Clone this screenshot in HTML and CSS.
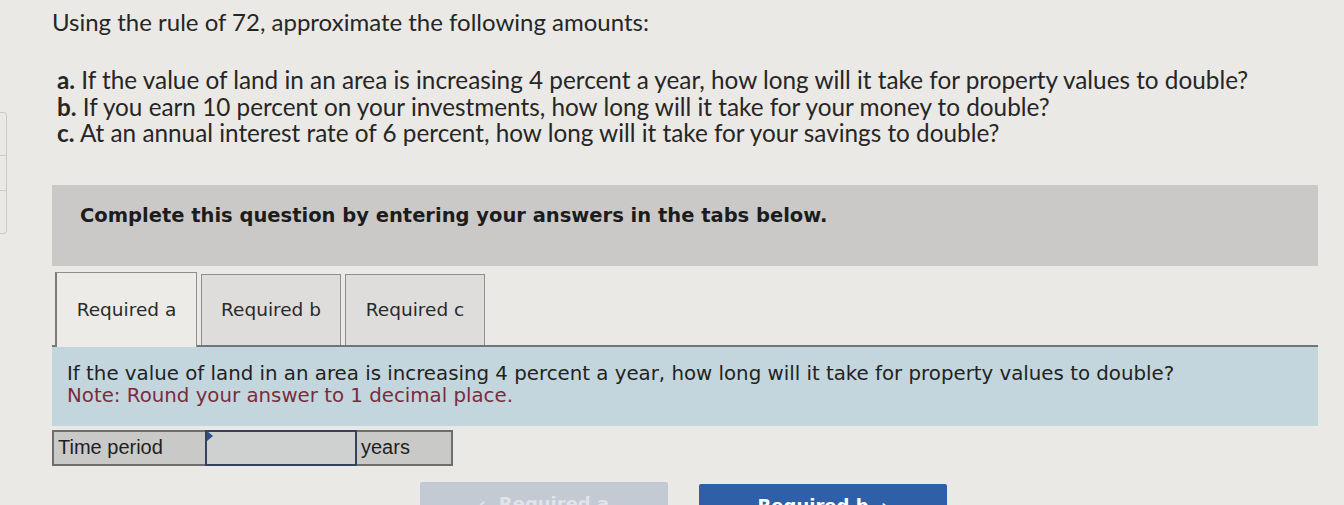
FILE: index.html
```html
<!DOCTYPE html>
<html lang="en">
<head>
  <meta charset="UTF-8">
  <title>Rule of 72</title>
  <link rel="stylesheet" href="styles.css">
</head>
<body>
  <div class="page">
    <div class="side-stub">
      <span></span>
      <span></span>
      <span></span>
    </div>
    <div class="question">
      <p class="intro">Using the rule of 72, approximate the following amounts:</p>
      <ol class="parts">
        <li><b>a.</b> If the value of land in an area is increasing 4 percent a year, how long will it take for property values to double?</li>
        <li><b>b.</b> If you earn 10 percent on your investments, how long will it take for your money to double?</li>
        <li><b>c.</b> At an annual interest rate of 6 percent, how long will it take for your savings to double?</li>
      </ol>

      <div class="instructions">Complete this question by entering your answers in the tabs below.</div>

      <div class="tabs">
        <div class="tab active">Required a</div>
        <div class="tab">Required b</div>
        <div class="tab">Required c</div>
      </div>

      <div class="tab-panel">
        <p>If the value of land in an area is increasing 4 percent a year, how long will it take for property values to double?</p>
        <p class="note">Note: Round your answer to 1 decimal place.</p>
      </div>

      <div class="answer-row">
        <div class="cell label">Time period</div>
        <div class="cell input"><span class="flag"></span></div>
        <div class="cell unit">years</div>
      </div>

      <div class="nav">
        <a href="javascript:;" class="btn prev">&lsaquo;&nbsp; Required a</a>
        <a href="javascript:;" class="btn next">Required b &nbsp;&rsaquo;</a>
      </div>
    </div>
  </div>
</body>
</html>
```

FILE: styles.css
```css
body {
  margin: 0;
  background: #eae9e5;
  color: #262626;
  height: 505px;
  overflow: hidden;
}
.page {
  display: flex;
  align-items: flex-start;
}
.side-stub {
  width: 6px;
  margin-top: 112px;
  display: flex;
  flex-direction: column;
  border: 1px solid #cbcac6;
  border-left: none;
  border-radius: 0 4px 4px 0;
}
.side-stub span {
  height: 42px;
  border-top: 1px solid #cbcac6;
}
.side-stub span:first-child {
  border-top: none;
}
.side-stub span:nth-child(2) {
  height: 34px;
}
.question {
  width: 1266px;
  margin-left: 45px;
}
.intro {
  margin: 8px 0 0;
  font: 24px/28px Lato, "Open Sans", sans-serif;
}
.parts {
  list-style: none;
  margin: 31px 0 0;
  padding: 0 0 0 5px;
  font: 24.3px/26.5px Lato, "Open Sans", sans-serif;
}
.parts b {
  font-weight: 700;
}
.instructions {
  margin-top: 38px;
  height: 81px;
  box-sizing: border-box;
  padding: 17px 0 0 28px;
  background: #cac9c7;
  font: bold 19.5px/28px "DejaVu Sans", Verdana, sans-serif;
  color: #1c1c1c;
}
.tabs {
  display: flex;
  align-items: flex-end;
  gap: 4px;
  margin-top: 6px;
  padding-left: 3px;
}
.tab {
  width: 140px;
  height: 71px;
  box-sizing: border-box;
  border: 1px solid #8f8f8f;
  border-bottom: none;
  background: #dedddb;
  display: flex;
  align-items: center;
  justify-content: center;
  font: 18.5px "DejaVu Sans", Verdana, sans-serif;
  color: #2a2a2a;
}
.tab.active {
  height: 75px;
  width: 142px;
  background: #ecebe8;
  border-left: 2px solid #7c7c7c;
  margin-bottom: -2px;
  position: relative;
}
.tab-panel {
  height: 81px;
  box-sizing: border-box;
  border-top: 2px solid #6f7579;
  background: #c4d6dd;
  padding: 16px 0 0 15px;
  font: 19.8px/22px "DejaVu Sans", Verdana, sans-serif;
  color: #222;
}
.tab-panel p {
  margin: 0;
}
.tab-panel .note {
  color: #7a2c3e;
}
.answer-row {
  display: flex;
  width: 401px;
  height: 36px;
  margin-top: 4px;
  box-sizing: border-box;
  border: 2px solid #6e6e6e;
  background: #c9c9c8;
  font: 20px "Liberation Sans", Arial, sans-serif;
  color: #1f1f1f;
}
.cell {
  display: flex;
  align-items: center;
  padding-left: 4px;
}
.label {
  width: 151px;
  box-sizing: border-box;
}
.input {
  width: 152px;
  box-sizing: border-box;
  padding: 0;
  border: 2px solid #34435c;
  margin: -2px 0;
  background: #cfd0d0;
  align-items: flex-start;
}
.flag {
  width: 0;
  height: 0;
  border-top: 5px solid transparent;
  border-bottom: 5px solid transparent;
  border-left: 6px solid #2c4f85;
  margin-top: -1px;
}
.unit {
  flex: 1;
}
.nav {
  display: flex;
  gap: 31px;
  margin: 16px 0 0 368px;
}
.btn {
  width: 248px;
  height: 40px;
  display: flex;
  justify-content: center;
  padding-top: 11px;
  box-sizing: border-box;
  border-radius: 2px;
  text-decoration: none;
  font: bold 18px "DejaVu Sans", Verdana, sans-serif;
}
.prev {
  background: #c3cad3;
  color: #dfe4ea;
}
.next {
  margin-top: 2px;
  background: #2f5fa6;
  color: #fff;
}
```
